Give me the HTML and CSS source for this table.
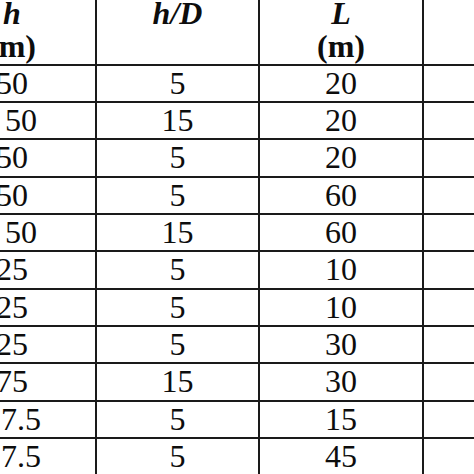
FILE: index.html
```html
<!DOCTYPE html>
<html>
<head>
<meta charset="utf-8">
<link rel="stylesheet" href="styles.css">
</head>
<body>
<div class="frame">
<table class="grid">
  <colgroup>
    <col class="c1"><col class="c2"><col class="c3"><col class="c4">
  </colgroup>
  <thead>
    <tr class="head">
      <th><i>h</i><br>(m)</th>
      <th><i>h/D</i><br>&nbsp;</th>
      <th><i>L</i><br>(m)</th>
      <th></th>
    </tr>
  </thead>
  <tbody>
    <tr><td>50</td><td>5</td><td>20</td><td></td></tr>
    <tr><td><span class="pad"></span>50</td><td>15</td><td>20</td><td></td></tr>
    <tr><td>50</td><td>5</td><td>20</td><td></td></tr>
    <tr><td>50</td><td>5</td><td>60</td><td></td></tr>
    <tr><td><span class="pad"></span>50</td><td>15</td><td>60</td><td></td></tr>
    <tr><td>25</td><td>5</td><td>10</td><td></td></tr>
    <tr><td>25</td><td>5</td><td>10</td><td></td></tr>
    <tr><td>25</td><td>5</td><td>30</td><td></td></tr>
    <tr><td>75</td><td>15</td><td>30</td><td></td></tr>
    <tr><td><span class="pad"></span>7.5</td><td>5</td><td>15</td><td></td></tr>
    <tr><td><span class="pad"></span>7.5</td><td>5</td><td>45</td><td></td></tr>
  </tbody>
</table>
</div>
</body>
</html>
```

FILE: styles.css
```css
html, body {
  margin: 0;
  padding: 0;
  background: #ffffff;
}

body {
  font-family: "Liberation Serif", "Times New Roman", serif;
  color: #0d0d0d;
}

.frame {
  width: 474px;
  height: 474px;
  overflow: hidden;
}

.grid {
  border-collapse: collapse;
  table-layout: fixed;
  width: 600px;
  margin-left: -73px;
  margin-top: -3.5px;
}

.c1 { width: 168px; }
.c2 { width: 163px; }
.c3 { width: 164px; }
.c4 { width: 105px; }

.grid th,
.grid td {
  border: 2px solid #1a1a1a;
  padding: 0;
  text-align: center;
  font-size: 32px;
}

.grid thead th {
  border-top: none;
  font-weight: bold;
  line-height: 33.5px;
  height: 67px;
  vertical-align: top;
}

.grid td {
  height: 35.35px;
  line-height: 35px;
  vertical-align: middle;
  font-weight: normal;
}

.pad {
  display: inline-block;
  width: 18px;
}
```
